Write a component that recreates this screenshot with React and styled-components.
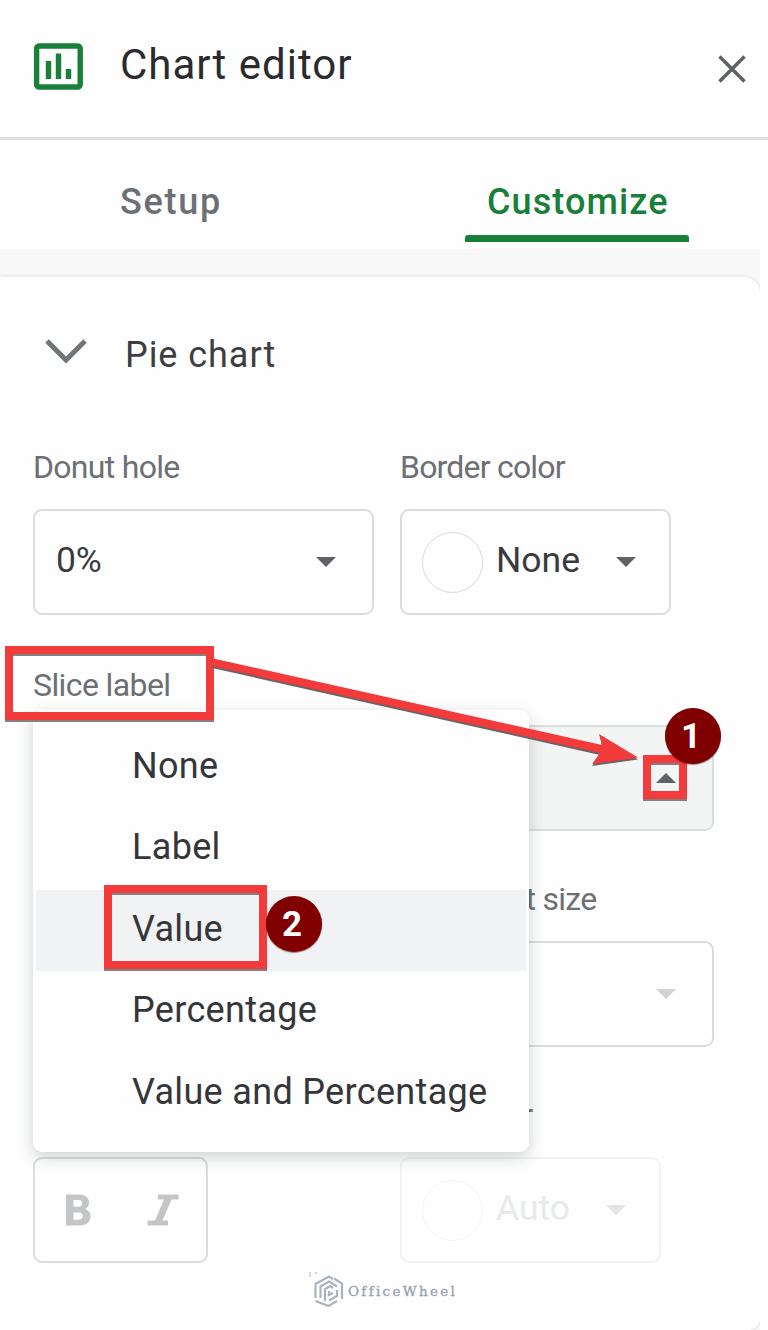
import React, { useState } from "react";
import styled, { createGlobalStyle } from "styled-components";

const sliceOptions = ["None", "Label", "Value", "Percentage", "Value and Percentage"];

function Caret({ up, color = "#5f6368" }) {
  return (
    <CaretSvg viewBox="0 0 20 10">
      <path d={up ? "M0 10L10 0L20 10Z" : "M0 0L10 10L20 0Z"} fill={color} />
    </CaretSvg>
  );
}

function App() {
  const [selected, setSelected] = useState("Value");

  return (
    <Page>
      <GlobalStyle />
      <Header>
        <ChartIcon viewBox="0 0 50 47">
          <rect x="3.6" y="3" width="43.6" height="41" rx="2.5" />
          <path d="M15.5 18v18M25.5 10.500v25.500M35.500 26v10" />
        </ChartIcon>
        <Title>Chart editor</Title>
        <CloseIcon viewBox="0 0 28 28">
          <path d="M1.500 1.500L26.500 26.500M26.500 1.500L1.500 26.500" />
        </CloseIcon>
      </Header>
      <Tabs>
        <Tab $left={120} $spacing={1.7}>Setup</Tab>
        <Tab $left={22} $spacing={1.1} $active>Customize</Tab>
        <TabLine />
      </Tabs>

      <Content>
        <Card>
          <SectionHead>
            <Chevron viewBox="0 0 42 25">
              <path d="M2 2L21 21L40 2" />
            </Chevron>
            <SectionTitle>Pie chart</SectionTitle>
          </SectionHead>

          <Row>
            <Field $width={341}>
              <Label $spacing={-0.7}>Donut hole</Label>
              <Select $width={341} $caret={36}>
                <Value $spacing={-0.3}>0%</Value>
                <Caret />
              </Select>
            </Field>
            <Field $width={271}>
              <Label $spacing={-0.8}>Border color</Label>
              <Select $width={271} $caret={33} $pad={20}>
                <Swatch />
                <Value>None</Value>
                <Caret />
              </Select>
            </Field>
          </Row>

          <Row>
            <Field $width={681}>
              <Label $spacing={-0.6} $low>Slice label</Label>
              <Select $width={681} $caret={36} $open>
                <Value />
                <Caret up />
              </Select>
            </Field>
          </Row>

          <Row>
            <Field $width={341} />
            <Field $width={314}>
              <Label $spacing={-0.75}>Label font size</Label>
              <Select $width={314} $caret={36}>
                <Value />
                <Caret color="#d2d3d4" />
              </Select>
            </Field>
          </Row>

          <Row>
            <Field $width={341}>
              <Label />
              <FormatGroup>
                <FormatIcon viewBox="0 0 32 32">
                  <path
                    fillRule="evenodd"
                    d="M4 0.500H17C23 0.500 27 3.500 27 8.500C27 11.500 25.500 13.800 23 15C26.800 16.200 28.500 18.800 28.500 22.300C28.500 28 24.500 31.500 18 31.500H4ZM11.500 6V12.800H16.500C18.800 12.800 20 11.500 20 9.400C20 7.200 18.800 6 16.500 6ZM11.500 18.500V25.700H17C19.500 25.700 20.700 24.400 20.700 22.100C20.700 19.800 19.500 18.500 17 18.500Z"
                  />
                </FormatIcon>
                <FormatIcon viewBox="0 0 32 32">
                  <path d="M11 0.500H31.500V5.500H24.500L15.500 26.500H21V31.500H0.500V26.500H8L17 5.500H11Z" />
                </FormatIcon>
              </FormatGroup>
            </Field>
            <Field $width={261}>
              <Label $spacing={-0.85}>Text color</Label>
              <Select $width={261} $caret={33} $pad={20} $disabled>
                <Swatch $disabled />
                <Value $disabled>Auto</Value>
                <Caret color="#e3e5e5" />
              </Select>
            </Field>
          </Row>
        </Card>
      </Content>

      <Menu>
        {sliceOptions.map((option) => (
          <MenuItem
            key={option}
            $active={option === selected}
            onClick={() => setSelected(option)}
          >
            {option}
          </MenuItem>
        ))}
      </Menu>

      {/* callouts on top of the panel */}
      <Outline $x={5} $y={646} $w={209} $h={74} />
      <Outline $x={104} $y={885} $w={163} $h={84} />
      <Outline $x={643} $y={755} $w={44} $h={44} />
      <Arrow viewBox="0 0 440 115">
        <path
          fill="#6e6262"
          d="M2 10L3 18L391 105L383 116L429 109.500L391 86L393 97Z"
        />
        <path
          fill="#f43b3b"
          d="M2 8L3 16L391 103L383 114L429 107.500L390 84L393 95Z"
        />
      </Arrow>
      <Badge $x={665} $y={707.500}>1</Badge>
      <Badge $x={266} $y={895.500}>2</Badge>

      <Brand>
        <BrandIcon viewBox="0 0 30 32">
          <path d="M1.500 23V9L15 1.500L19 4M20 3.500L28 8.500V24M1.500 26L14.500 31L23 26M6.500 23V11.500L15 6.500L23 11.500M11 26V14L16 11L19 13M23 15V21L15 25.500M15 16V20L19 18" />
          <path d="M-4 -3V2M2 -3V-1" opacity="0.500" />
        </BrandIcon>
        <BrandName>OfficeWheel</BrandName>
      </Brand>
    </Page>
  );
}

const GlobalStyle = createGlobalStyle`
  * {
    box-sizing: border-box;
  }

  body {
    margin: 0;
    background: #fefefe;
    font-family: Roboto, "Liberation Sans", sans-serif;
  }
`;

const Page = styled.div`
  position: relative;
  width: 768px;
  height: 1330px;
  overflow: hidden;
  background: #fefefe;
`;

const Header = styled.header`
  display: flex;
  align-items: flex-start;
  height: 140px;
  padding: 43px 22px 0 33px;
  border-bottom: 3px solid #dedfe4;
`;

const ChartIcon = styled.svg`
  width: 50px;
  height: 47px;
  fill: none;
  stroke: #188038;
  stroke-width: 5.4;
`;

const Title = styled.h1`
  flex: 1;
  margin: -3px 0 0 37px;
  font-size: 42px;
  font-weight: 400;
  line-height: 50px;
  letter-spacing: 1px;
  color: #2a2b2e;
`;

const CloseIcon = styled.svg`
  width: 28px;
  height: 28px;
  margin-top: 12px;
  fill: none;
  stroke: #5f6368;
  stroke-width: 3.6;
`;

const Tabs = styled.nav`
  display: grid;
  grid-template-columns: 465px 224px;
  grid-template-rows: 95px 7px;
  height: 109px;
`;

const Tab = styled.div`
  padding: 41px 0 0 ${(props) => props.$left}px;
  font-size: 36px;
  font-weight: 500;
  line-height: 42px;
  letter-spacing: ${(props) => props.$spacing}px;
  white-space: nowrap;
  color: ${(props) => (props.$active ? "#188038" : "#6c7075")};
`;

const TabLine = styled.div`
  grid-column: 2;
  border-radius: 3px 3px 0 0;
  background: #188038;
`;

const Content = styled.main`
  width: 760px;
  padding-top: 28px;
  overflow: hidden;
  background: #f8f8f8;
`;

const Card = styled.section`
  height: 1053px;
  padding: 0 33px;
  border-radius: 0 16px 12px 0;
  background: #fefefe;
  box-shadow: 0 0 4px rgba(60, 70, 67, 0.16);
`;

const SectionHead = styled.div`
  display: flex;
  align-items: flex-start;
  height: 170px;
  padding: 54px 0 0 12px;
`;

const Chevron = styled.svg`
  width: 42px;
  height: 25px;
  margin-top: 8px;
  fill: none;
  stroke: #70757a;
  stroke-width: 5;
`;

const SectionTitle = styled.h2`
  margin: 0 0 0 38px;
  font-size: 36px;
  font-weight: 400;
  line-height: 48px;
  letter-spacing: 0.95px;
  color: #3c4043;
`;

const Row = styled.div`
  display: flex;
  gap: 26px;
  height: 216px;
`;

const Field = styled.div`
  width: ${(props) => props.$width}px;
`;

const Label = styled.div`
  height: 62px;
  padding-top: ${(props) => (props.$low ? 2 : 0)}px;
  font-size: 32px;
  line-height: 40px;
  letter-spacing: ${(props) => props.$spacing || 0}px;
  white-space: nowrap;
  color: #6c7074;
`;

const Select = styled.div`
  display: flex;
  align-items: center;
  width: ${(props) => props.$width}px;
  height: 106px;
  padding: 0 ${(props) => props.$caret}px 0 ${(props) => props.$pad || 21}px;
  border: 2px solid ${(props) => (props.$disabled ? "#f1f2f2" : "#dadce0")};
  border-radius: 9px;
  background: ${(props) => (props.$open ? "#f3f4f4" : "transparent")};
`;

const Value = styled.span`
  flex: 1;
  font-size: 35.5px;
  line-height: 42px;
  padding-bottom: 4.5px;
  letter-spacing: ${(props) => props.$spacing || 0}px;
  color: ${(props) => (props.$disabled ? "#e8eaea" : "#3a3b3e")};
`;

const Swatch = styled.span`
  width: 61px;
  height: 61px;
  margin-right: 13px;
  border: 1.5px solid ${(props) => (props.$disabled ? "#f4f6f6" : "#d9dada")};
  border-radius: 50%;
`;

const CaretSvg = styled.svg`
  flex: none;
  width: 20px;
  height: 10px;
`;

const FormatGroup = styled.div`
  display: flex;
  align-items: center;
  gap: 53px;
  width: 175px;
  height: 106px;
  padding-left: 27px;
  border: 2px solid #dadce0;
  border-radius: 9px;
`;

const FormatIcon = styled.svg`
  width: 32px;
  height: 32px;
  fill: #c4c5c6;
`;

const Menu = styled.div`
  position: absolute;
  left: 33px;
  top: 710px;
  width: 496px;
  height: 442px;
  padding: 17px 3px 0;
  border-radius: 9px;
  background: #fefefe;
  box-shadow: 0 5px 16px rgba(60, 70, 67, 0.24);
`;

const MenuItem = styled.div`
  height: 81.4px;
  padding-left: 96px;
  font-size: 36px;
  line-height: 79px;
  letter-spacing: 0.33px;
  color: #35363a;
  background: ${(props) => (props.$active ? "#f1f2f4" : "transparent")};
`;

const Outline = styled.div`
  position: absolute;
  left: ${(props) => props.$x}px;
  top: ${(props) => props.$y}px;
  width: ${(props) => props.$w}px;
  height: ${(props) => props.$h}px;
  border: 8px solid #f43b3b;
  box-shadow: 0 2px 0 #858080, inset 0 2px 0 #858080;
`;

const Arrow = styled.svg`
  position: absolute;
  left: 209px;
  top: 650px;
  width: 440px;
  height: 115px;
  overflow: visible;
`;

const Badge = styled.div`
  position: absolute;
  left: ${(props) => props.$x}px;
  top: ${(props) => props.$y}px;
  width: 56px;
  height: 56px;
  padding-right: 4px;
  border-radius: 50%;
  font-size: 35px;
  font-weight: 700;
  line-height: 57px;
  text-align: center;
  color: #fff;
  background: #800000;
  box-shadow: 0 1px 1px rgba(60, 0, 0, 0.5);
`;

const Brand = styled.div`
  position: absolute;
  left: 314px;
  top: 1275px;
  display: flex;
  align-items: center;
  gap: 4px;
`;

const BrandIcon = styled.svg`
  width: 30px;
  height: 32px;
  overflow: visible;
  fill: none;
  stroke: #adb2c0;
  stroke-width: 2.2;
`;

const BrandName = styled.span`
  font-family: "DejaVu Serif", serif;
  font-size: 13.5px;
  letter-spacing: 2.3px;
  color: #979eb0;
  -webkit-text-stroke: 0.3px #979eb0;
`;

export default App;
